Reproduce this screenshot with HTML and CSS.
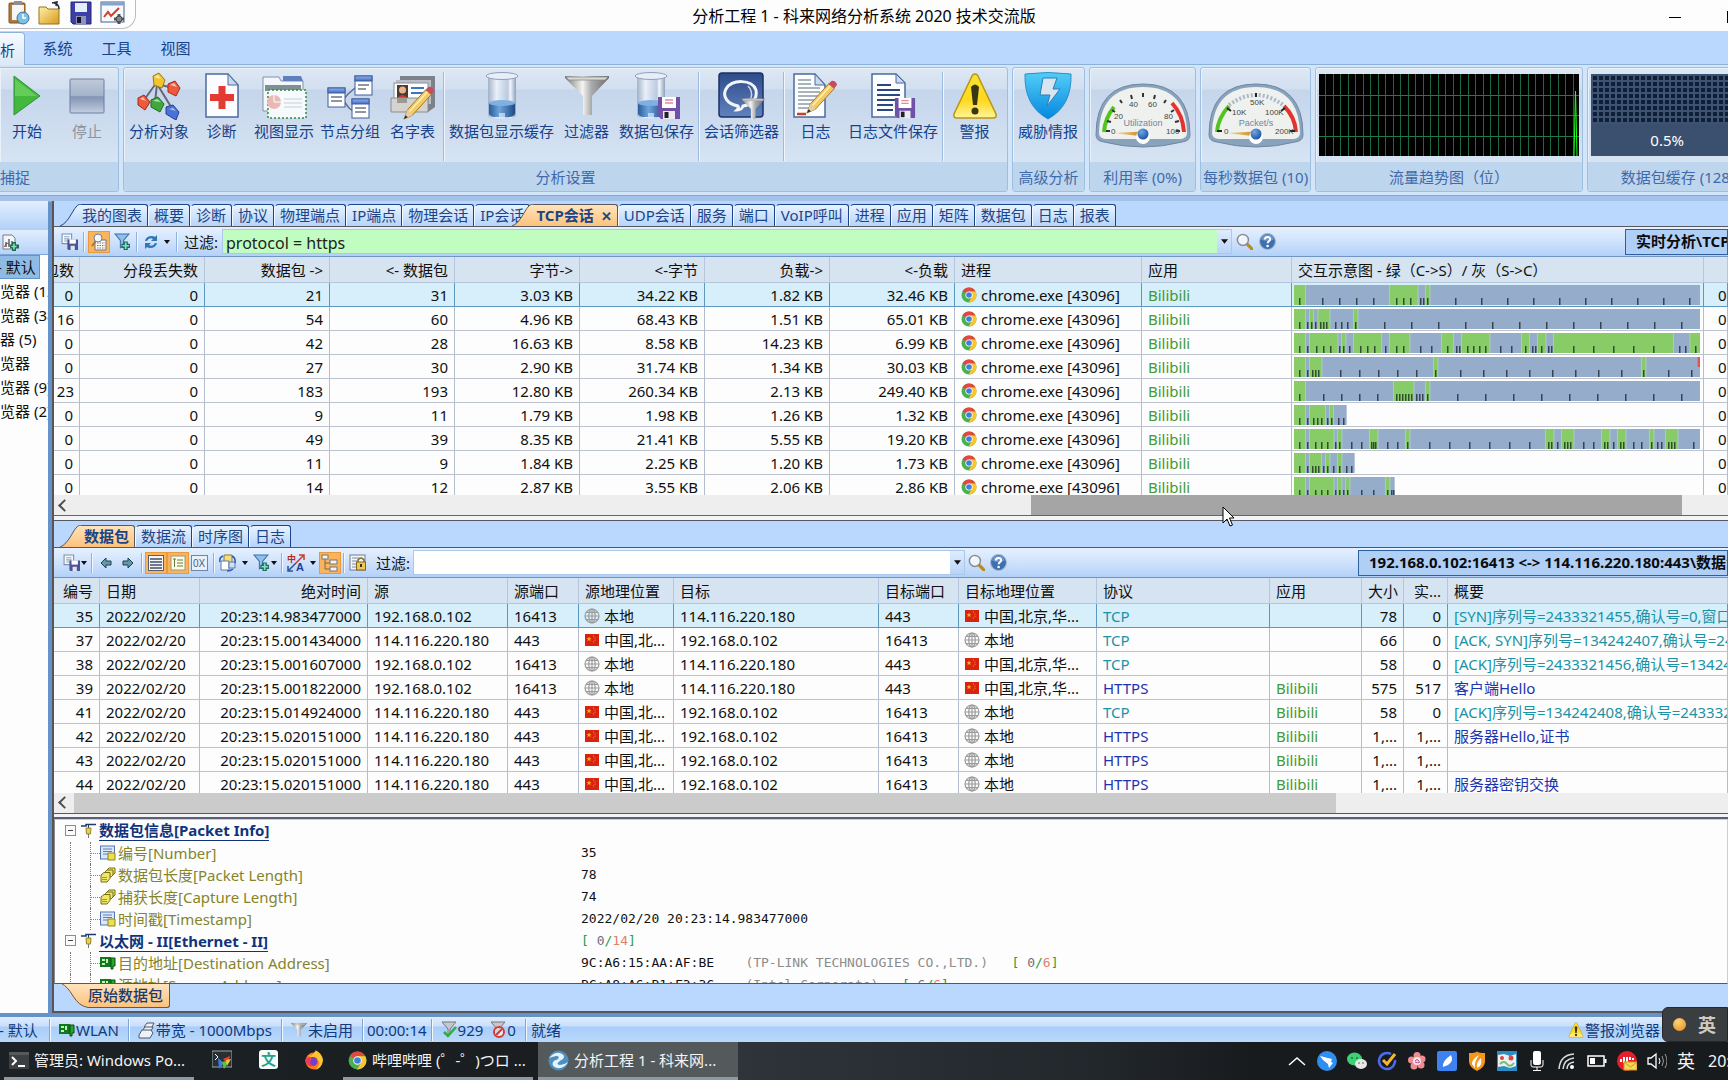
FILE: index.html
```html
<!DOCTYPE html>
<html lang="zh-CN">
<head>
    <meta charset="UTF-8">
    <meta name="viewport" content="width=device-width, initial-scale=1.0">
    <title>分析工程 1 - 科来网络分析系统 2020 技术交流版</title>
    <link rel="stylesheet" href="styles.css">
</head>
<body>
    <!-- shared icons -->
    <svg class="sprite" aria-hidden="true">
        <defs>
            <linearGradient id="gMetal" x1="0" x2="1"><stop offset="0" stop-color="#77797c"/><stop offset=".4" stop-color="#f4f4f2"/><stop offset=".6" stop-color="#a9aaab"/><stop offset="1" stop-color="#6d6e70"/></linearGradient>
            <linearGradient id="gGlass" x1="0" x2="1"><stop offset="0" stop-color="#9aabc2"/><stop offset=".3" stop-color="#eef4fb"/><stop offset=".7" stop-color="#b9c8dc"/><stop offset=".8" stop-color="#f5f9fd"/><stop offset="1" stop-color="#8496b2"/></linearGradient>
            <linearGradient id="gWater" x1="0" x2="1"><stop offset="0" stop-color="#2b5b99"/><stop offset=".4" stop-color="#6ea5dc"/><stop offset="1" stop-color="#1f4a86"/></linearGradient>
            <linearGradient id="gOrange" x1="0" y1="0" x2="0" y2="1"><stop offset="0" stop-color="#ffe3bd"/><stop offset="1" stop-color="#fdc27c"/></linearGradient>
            <linearGradient id="gTab" x1="0" y1="0" x2="0" y2="1"><stop offset="0" stop-color="#e9f3ff"/><stop offset="1" stop-color="#b6d4fb"/></linearGradient>
            <linearGradient id="gFolder" x1="0" y1="0" x2="1" y2="1"><stop offset="0" stop-color="#fff0a8"/><stop offset="1" stop-color="#d79a1c"/></linearGradient>
            <linearGradient id="gYellow" x1="0" y1="0" x2="0" y2="1"><stop offset="0" stop-color="#f7e232"/><stop offset=".6" stop-color="#ffd820"/><stop offset="1" stop-color="#fff59a"/></linearGradient>
            <linearGradient id="gShield" x1="0" y1="0" x2="0" y2="1"><stop offset="0" stop-color="#52cdf6"/><stop offset="1" stop-color="#0587e0"/></linearGradient>
            <linearGradient id="gStop" x1="0" y1="0" x2="0" y2="1"><stop offset="0" stop-color="#bfcadb"/><stop offset=".5" stop-color="#a3b2ca"/><stop offset=".52" stop-color="#8194b4"/><stop offset="1" stop-color="#c3cee0"/></linearGradient>
            <linearGradient id="gBlueCard" x1="0" y1="0" x2="0" y2="1"><stop offset="0" stop-color="#8fb4f4"/><stop offset="1" stop-color="#4468c4"/></linearGradient>
            <linearGradient id="gNavy" x1="0" y1="0" x2="0" y2="1"><stop offset="0" stop-color="#2f4c8a"/><stop offset="1" stop-color="#5f82bd"/></linearGradient>
            <linearGradient id="gNeedle" x1="0" x2="1"><stop offset="0" stop-color="#f5d48e"/><stop offset="1" stop-color="#c98a20"/></linearGradient>
            <radialGradient id="gBall" cx=".35" cy=".3" r=".8"><stop offset="0" stop-color="#6fa7e6"/><stop offset="1" stop-color="#174c9c"/></radialGradient>
            <pattern id="pGrid" width="15" height="21" patternUnits="userSpaceOnUse"><path d="M6.500 0v21M14.500 0v21" stroke="#1c6a40"/></pattern>
        </defs>
        <symbol id="i-chrome" viewBox="0 0 16 16">
            <circle cx="8" cy="8" r="7.5" fill="#4caf50"/>
            <path d="M8 8L1.5 4.2A7.5 7.5 0 0 1 14.6 4.5H8z" fill="#e04a3c"/>
            <path d="M8 4.5h6.6A7.5 7.5 0 0 1 7.6 15.5L11 9.8z" fill="#fbc530"/>
            <circle cx="8" cy="8" r="3.6" fill="#fff"/><circle cx="8" cy="8" r="2.8" fill="#3f7fe0"/>
        </symbol>
        <symbol id="i-globe" viewBox="0 0 16 16">
            <g fill="none" stroke="#9a9a9a" stroke-width="1.2"><circle cx="8" cy="8" r="7"/><ellipse cx="8" cy="8" rx="3.2" ry="7"/><path d="M1 8h14M8 1v14M2.2 4.4h11.6M2.2 11.6h11.6"/></g>
        </symbol>
        <symbol id="i-flag" viewBox="0 0 14 12">
            <rect width="14" height="12" fill="#d9230f"/><path d="M4 2.6l.7 1.7h1.8L5 5.4l.6 1.8L4 6.1 2.4 7.2 3 5.4 1.5 4.3h1.8z" fill="#ffb41e"/><path d="M8 1.5h1v1H8zM9.5 3.5h1v1h-1zM9.5 5.8h1v1h-1zM8 7.5h1v1H8z" fill="#f99a1c"/>
        </symbol>
        <symbol id="i-disk" viewBox="0 0 24 24">
            <path d="M1 1h22v22H4l-3-3z" fill="#6f52a8"/><rect x="5" y="1" width="14" height="11" fill="#fff"/><path d="M8 4h8M8 7h8" stroke="#e8899a" stroke-width="1.5"/><rect x="6" y="15" width="12" height="8" fill="#ece9f3"/><rect x="7.500" y="16" width="4" height="6" fill="#222"/>
        </symbol>
        <symbol id="i-find" viewBox="0 0 16 16">
            <path d="M10 10l5 5" stroke="#b58c22" stroke-width="3" stroke-linecap="round"/><circle cx="6.500" cy="6.500" r="5.200" fill="#eef5fc" stroke="#8c8c94" stroke-width="1.4"/><path d="M3.500 6a3.200 3.200 0 0 1 3-3" stroke="#fff" fill="none" stroke-width="1.5"/>
        </symbol>
        <symbol id="i-help" viewBox="0 0 16 16">
            <circle cx="8" cy="8" r="7.500" fill="#3e6fae" stroke="#a8b9cf"/><path d="M2 6a6.200 6.200 0 0 1 12 0q-6 3-12 0z" fill="#7fa8d8" opacity=".7"/><path d="M5.500 6.200C5.500 2.800 10.800 3 10.500 6c-.1 1.600-2.400 1.800-2.400 3.600" fill="none" stroke="#fff" stroke-width="1.800"/><circle cx="8.100" cy="12.200" r="1.200" fill="#fff"/>
        </symbol>
        <symbol id="i-caret" viewBox="0 0 6 4"><path d="M0 0h6L3 4z" fill="#111"/></symbol>
        <symbol id="i-savelist" viewBox="0 0 16 16">
            <path d="M1 1h9v9H1z" fill="#f6f9fd" stroke="#7f8ea6"/><path d="M3 3.500h5M3 5.500h5M3 7.500h3" stroke="#8fa6c6"/><path d="M6 6h10v10H7l-1-1z" fill="#4b5596"/><path d="M8 6h6v4H8z" fill="#fff"/><path d="M9 12h4v4H9z" fill="#dfe3ee"/>
        </symbol>
        <symbol id="i-funneladd" viewBox="0 0 16 16">
            <path d="M1 1h13L9 7v5l-3 2V7z" fill="#8fc0ea" stroke="#3d6fa8"/><path d="M11 8v8M7 12h8" stroke="#1f6a5a" stroke-width="4"/><path d="M11 9v6M8 12h6" stroke="#7fe0c8" stroke-width="1.600"/>
        </symbol>
        <symbol id="i-funnel" viewBox="0 0 46 42">
            <path d="M1 1h44v2L28 21v19h-9V21L1 3z" fill="url(#gMetal)"/><path d="M2 2h42l-3 3H5z" fill="#d9d9d6" stroke="#8a8b8c" stroke-width=".8"/>
        </symbol>
        <symbol id="i-beaker" viewBox="0 0 36 48">
            <path d="M4 4h28v38q0 4-5 4H9q-5 0-5-4z" fill="url(#gGlass)" opacity=".85"/>
            <path d="M5 31h26v10q0 3-5 4H10q-5-1-5-4z" fill="url(#gWater)"/><ellipse cx="18" cy="31" rx="13" ry="3" fill="#7fb0e2"/>
            <ellipse cx="18" cy="4" rx="16" ry="3.500" fill="#e6eef7" stroke="#8fa0b8"/><rect x="15" y="41" width="6" height="6" fill="#dbe9f6" opacity=".7"/>
        </symbol>
        <symbol id="i-pencil" viewBox="0 0 34 36">
            <path d="M1 35l4-10L24 4l6 5L10 31z" fill="#f4cb62" stroke="#9c7324"/><path d="M7 27L26 6" stroke="#fff0b4" stroke-width="1.500"/><path d="M24 4l3-3q4-1 6 4l-3 4z" fill="#c94a5e"/><path d="M1 35l4-10 5 6z" fill="#e7cda6"/><path d="M1 35l2-4 2 2z" fill="#222"/>
        </symbol>
        <symbol id="i-branch" viewBox="0 0 16 16">
            <path d="M0 3h5V1.500h10" fill="none" stroke="#1d3a70" stroke-width="1.500"/><path d="M7.500 2v3" stroke="#1d3a70"/><path d="M5 5h5l-.5 6h-4z" fill="#e9cf4a" stroke="#9a8420"/><path d="M7.500 11v4" stroke="#777"/>
        </symbol>
        <symbol id="i-sheet" viewBox="0 0 16 16">
            <rect x=".5" y="1" width="14" height="13" fill="#dbe8fa" stroke="#5577b0"/><path d="M3 4h9M3 6.500h9M3 9h5" stroke="#5b7fc0"/><path d="M8 8h7v7H8z" fill="#ece04c" stroke="#8d8424"/>
        </symbol>
        <symbol id="i-stack" viewBox="0 0 16 16">
            <g stroke="#776f12" fill="#f0e66a"><path d="M6 4l3-3h6v5l-2 2H6z"/><path d="M4 6l3-3h6v5l-2 2H4z"/><path d="M1 8l3-2.500h6v6L7 15H1z"/></g><path d="M2 10.500h5M2 12.500h5" stroke="#a39a30"/>
        </symbol>
        <symbol id="i-nic" viewBox="0 0 16 14">
            <path d="M0 1h11v10H0z" fill="#0d7a1c"/><path d="M2 3h3v2H2zM6 3h2v4H6zM2 7h3v2H2z" fill="#c7f0b8"/><path d="M11 2h4v8h-2v3h-2z" fill="#2ba52e" stroke="#0a4d10"/>
        </symbol>
        <symbol id="i-warn" viewBox="0 0 46 48">
            <path d="M23 2q2 0 3 2l18 38q1 4-3 4H5q-4 0-3-4L20 4q1-2 3-2z" fill="url(#gYellow)" stroke="#b8960f" stroke-width="1.500"/><path d="M19 15q4-5 8 0l-2 18h-4z" fill="#383614"/><circle cx="23" cy="39" r="3.500" fill="#383614"/>
        </symbol>
    </svg>

    <header class="titlebar">
        <div class="quick">
            <svg width="22" height="24" viewBox="0 0 22 24"><rect x="1" y="2" width="16" height="20" rx="1" fill="#b07a3a" stroke="#7c5220"/><rect x="4" y="4" width="12" height="15" fill="#f6f6f2"/><rect x="6" y="0" width="8" height="4" fill="#8d8f93"/><circle cx="15" cy="17" r="6" fill="#7cc0e4" stroke="#3f6f96"/><path d="M15 13v4h3" stroke="#fff" fill="none" stroke-width="1.500"/></svg>
            <svg width="24" height="24" viewBox="0 0 24 24"><path d="M1 6h7l2 2h11v15H1z" fill="url(#gFolder)" stroke="#9b7418"/><path d="M16 2q5 1 5 6M14 2l5-1-1 4" stroke="#29303c" fill="none" stroke-width="1.600"/></svg>
            <svg width="22" height="24" viewBox="0 0 22 24"><path d="M1 1h20v22H3l-2-2z" fill="#3c3fa6" stroke="#25277a"/><rect x="5" y="2" width="12" height="9" fill="#e7eefb"/><rect x="6" y="15" width="10" height="8" fill="#8f93b8"/><rect x="7" y="16" width="4" height="6" fill="#14152c"/></svg>
            <svg width="25" height="24" viewBox="0 0 25 24"><rect x="1" y="1" width="23" height="20" fill="#f7fafd" stroke="#44608f"/><path d="M1 3h23" stroke="#86a2cf" stroke-width="3"/><path d="M4 16l4-5 3 4 8-8" stroke="#d33c2b" fill="none" stroke-width="2"/><path d="M19 13v10M14 18h10" stroke="#555" stroke-width="3"/><circle cx="19" cy="18" r="3" fill="#888" stroke="#444"/></svg>
        </div>
        <h1>分析工程 1 - 科来网络分析系统 2020 技术交流版</h1>
        <div class="winbtns">
            <button type="button" aria-label="最小化"><svg width="12" height="12"><path d="M0 6.500h12" stroke="#000"/></svg></button>
            <button type="button" aria-label="最大化"><svg width="12" height="12"><rect x=".5" y=".5" width="11" height="11" fill="none" stroke="#000"/></svg></button>
        </div>
    </header>

    <nav class="menubar">
        <button type="button" class="on">析</button>
        <button type="button">系统</button>
        <button type="button">工具</button>
        <button type="button">视图</button>
    </nav>

    <section class="ribbon">
        <div class="group first">
            <div class="tools">
                <button type="button" class="tool"><svg width="30" height="48" viewBox="0 0 30 48"><path d="M2 4l26 20L2 43z" fill="#43b83c" stroke="#2f8f38"/><path d="M3 7l22 17H3z" fill="#7bdb6c" opacity=".6"/></svg><span>开始</span></button>
                <button type="button" class="tool" disabled><svg width="36" height="48" viewBox="0 0 36 48"><rect x="1" y="7" width="34" height="34" rx="1" fill="url(#gStop)" stroke="#6b7fa3"/></svg><span>停止</span></button>
            </div>
            <div class="caption">捕捉</div>
        </div>

        <div class="group">
            <div class="tools">
                <button type="button" class="tool"><svg width="46" height="48" viewBox="0 0 46 48">
                    <path d="M21 10L8 28M21 12l16 4M21 12l-2 18M21 12l16 26" stroke="#667" fill="none" stroke-width="2"/>
                    <path d="M17 4l6-3 6 7-3 8-8-3z" fill="#f2c52c" stroke="#a07a10"/><path d="M32 12l7-3 5 7-4 8-8-4z" fill="#ee5a3c" stroke="#a32a18"/><path d="M2 26l6-3 6 7-5 8-7-5z" fill="#ee5a3c" stroke="#a32a18"/><path d="M15 28l7-3 6 7-4 8-9-5z" fill="#3fa83c" stroke="#1d6a20"/><path d="M30 35l7-2 6 7-3 8-10-6z" fill="#4a72d8" stroke="#233f92"/>
                    <path d="M18 5l4-2 3 4zM34 13l4-2 3 4zM4 27l3-2 3 4zM17 29l4-2 4 3zM33 37l4-1 3 3z" fill="#fff" opacity=".6"/></svg><span>分析对象</span></button>
                <button type="button" class="tool"><svg width="34" height="48" viewBox="0 0 34 48"><path d="M1 2h22l10 11v32H1z" fill="#fafcff" stroke="#4d6a9c" stroke-width="1.500"/><path d="M23 2v11h10z" fill="#c7d8ef" stroke="#4d6a9c"/><path d="M17 14v23M5 25.500h24" stroke="#e23b34" stroke-width="7"/></svg><span>诊断</span></button>
                <button type="button" class="tool"><svg width="46" height="48" viewBox="0 0 46 48"><path d="M2 5h16l2 4h22v30H2z" fill="#f3f6fa" stroke="#8391a8"/><path d="M22 4h18l2 5H22z" fill="#5f80bf"/><path d="M4 13h36v6H4z" fill="#7f8f96"/><rect x="7" y="18" width="38" height="28" fill="#f7fafc" stroke="#2f8a3a" stroke-width="1.500" stroke-dasharray="2 2"/><circle cx="13" cy="30" r="7" fill="#e9b9b5"/><path d="M13 23v7h7" stroke="#fff" fill="none"/><path d="M23 27h18M23 31h18M23 35h18" stroke="#c3cedd"/></svg><span>视图显示</span></button>
                <button type="button" class="tool"><svg width="46" height="48" viewBox="0 0 46 48"><path d="M16 28l5-6 7-6M16 28l6 8 4 3" fill="none" stroke="#5c6e8c" stroke-width="1.500"/>
                    <g stroke="#3f5c9c"><rect x="28" y="4" width="17" height="19" fill="#fff"/><rect x="28" y="4" width="17" height="5" fill="url(#gBlueCard)"/><rect x="1" y="16" width="17" height="19" fill="#fff"/><rect x="1" y="16" width="17" height="5" fill="url(#gBlueCard)"/><rect x="25" y="27" width="17" height="19" fill="#fff"/><rect x="25" y="27" width="17" height="5" fill="url(#gBlueCard)"/></g>
                    <path d="M31 13h11M31 17h8M4 25h11M4 29h11M28 36h11M28 40h11" stroke="#6e7684" stroke-width="1.500"/></svg><span>节点分组</span></button>
                <button type="button" class="tool"><svg width="46" height="48" viewBox="0 0 46 48"><path d="M10 4h35v31l-7 5V12h-28z" fill="#7d828a"/><path d="M6 8h35v24H6z" fill="#b9bec6"/><rect x="4" y="11" width="34" height="20" fill="#fff" stroke="#8a8f96"/><rect x="7" y="13" width="11" height="14" fill="#4b3a34"/><circle cx="12.500" cy="18" r="3.500" fill="#e9b48c"/><path d="M7 27q5-8 11 0z" fill="#c93a34"/><path d="M21 16h13M21 21h13" stroke="#3a76c4" stroke-width="1.800"/><path d="M1 26h37v14H1z" fill="#d5d3cf" stroke="#8f8d88"/><path d="M7 26h10v5H7z" fill="#9b9994"/><svg x="12" y="14" width="34" height="34"><use href="#i-pencil"/></svg></svg><span>名字表</span></button>
                <i class="sep"></i>
                <button type="button" class="tool"><svg width="36" height="48"><use href="#i-beaker"/></svg><span>数据包显示缓存</span></button>
                <button type="button" class="tool"><svg width="46" height="48"><use href="#i-funnel" y="3" height="42"/></svg><span>过滤器</span></button>
                <button type="button" class="tool"><svg width="48" height="48"><use href="#i-beaker" width="36" height="48"/><use href="#i-disk" x="24" y="24" width="24" height="24"/></svg><span>数据包保存</span></button>
                <i class="sep"></i>
                <button type="button" class="tool"><svg width="48" height="48" viewBox="0 0 48 48"><rect x="1" y="1" width="44" height="44" rx="3" fill="url(#gNavy)" stroke="#1d3264" stroke-width="1.500"/><path d="M20 34C9 32 4 24 8 17 14 7 34 7 38 18 40 28 32 33 25 34q-1 4-6 4 2-2 1-4z" fill="none" stroke="#f2f6fb" stroke-width="3"/><path d="M30 14q5 5 3 12" fill="none" stroke="#cdd8ea" stroke-width="1.500"/><svg x="23" y="26" width="24" height="22" viewBox="0 0 46 42"><use href="#i-funnel"/></svg></svg><span>会话筛选器</span></button>
                <i class="sep"></i>
                <button type="button" class="tool"><svg width="46" height="48" viewBox="0 0 46 48"><path d="M1 2h21l10 11v32H1z" fill="#fcfdff" stroke="#4d6a9c" stroke-width="1.500"/><path d="M22 2v11h10z" fill="#c7d8ef" stroke="#4d6a9c"/><path d="M5 8h13M5 12h13M5 16h22M5 20h22M5 24h22M5 28h20M5 32h16M5 36h12" stroke="#8f99a6" stroke-width="1.300"/><path d="M4 42h9" stroke="#c8402a" stroke-width="2.500"/><svg x="12" y="8" width="34" height="34"><use href="#i-pencil"/></svg></svg><span>日志</span></button>
                <button type="button" class="tool"><svg width="46" height="48" viewBox="0 0 46 48"><path d="M2 2h24l9 9v34H2z" fill="#fcfdff" stroke="#4d6a9c" stroke-width="1.500"/><path d="M26 2v9h9z" fill="#c7d8ef" stroke="#4d6a9c"/><path d="M7 13h14M7 18h23M7 23h23M7 28h20M7 33h16M7 38h16" stroke="#2b477f" stroke-width="1.800"/><use href="#i-disk" x="24" y="24" width="22" height="24"/></svg><span>日志文件保存</span></button>
                <i class="sep"></i>
                <button type="button" class="tool"><svg width="46" height="48"><use href="#i-warn"/></svg><span>警报</span></button>
            </div>
            <div class="caption">分析设置</div>
        </div>

        <div class="group">
            <div class="tools">
                <button type="button" class="tool"><svg width="48" height="48" viewBox="0 0 48 48"><path d="M1 2q23-3 46 0 1 32-23 45Q0 34 1 2z" fill="url(#gShield)" stroke="#2b8fca"/><path d="M19 6h14l-4 11h7L23 34l3-11h-10z" fill="#d8e4f0" stroke="#2a7fb8"/></svg><span>威胁情报</span></button>
            </div>
            <div class="caption">高级分析</div>
        </div>

        <div class="group gauge">
            <div class="tools">
                <svg width="98" height="66" viewBox="0 0 98 66">
                    <path d="M2 52Q2 1 49 1t47 51q0 6-8 7-39 10-78 0-8-1-8-7z" fill="#8aa3bd" stroke="#6f88a4"/>
                    <path d="M5 50Q6 4 49 4t44 46q0 5-6 6H11q-6-1-6-6z" fill="#eef1ee"/>
                    <path d="M10 49q1-14 10-25" stroke="#52c41f" stroke-width="4" fill="none"/><path d="M78 20q11 12 12 29" stroke="#e2332f" stroke-width="4" fill="none"/>
                    <path d="M12 48h4M13 38l4 1M18 27l3 2M26 17l2 3M37 12l1 4M49 10v4M61 12l-1 4M72 17l-2 3M80 27l-3 2M85 38l-4 1M86 48h-4" stroke="#333" stroke-width="2"/>
                    <g class="dial"><text x="17" y="51">0</text><text x="20" y="36">20</text><text x="35" y="24">40</text><text x="54" y="24">60</text><text x="70" y="36">80</text><text x="72" y="51">100</text></g>
                    <text x="49" y="43" class="unit">Utilization</text>
                    <path d="M20 50l29-1.500v5z" fill="url(#gNeedle)"/><circle cx="49" cy="54" r="7" fill="#fff"/><circle cx="49" cy="51" r="5.500" fill="url(#gBall)"/>
                </svg>
            </div>
            <div class="caption">利用率 (0%)</div>
        </div>

        <div class="group gauge">
            <div class="tools">
                <svg width="98" height="66" viewBox="0 0 98 66">
                    <path d="M2 52Q2 1 49 1t47 51q0 6-8 7-39 10-78 0-8-1-8-7z" fill="#8aa3bd" stroke="#6f88a4"/>
                    <path d="M5 50Q6 4 49 4t44 46q0 5-6 6H11q-6-1-6-6z" fill="#eef1ee"/>
                    <path d="M22 22q27-20 54 0" stroke="#a9b8ca" stroke-width="4" stroke-dasharray="2 2" fill="none"/>
                    <path d="M10 49q1-14 12-26" stroke="#52c41f" stroke-width="4" fill="none"/><path d="M77 23q11 11 12 26" stroke="#e2332f" stroke-width="4" fill="none"/>
                    <path d="M10 48h5M20 25l4 3M49 10v4M78 25l-4 3M88 48h-5" stroke="#222" stroke-width="2"/>
                    <g class="dial"><text x="17" y="51">0</text><text x="25" y="32">10K</text><text x="43" y="22">50K</text><text x="58" y="32">100K</text><text x="68" y="51">200K</text></g>
                    <text x="49" y="43" class="unit">Packet/s</text>
                    <path d="M20 50l29-1.500v5z" fill="url(#gNeedle)"/><circle cx="49" cy="54" r="7" fill="#fff"/><circle cx="49" cy="51" r="5.500" fill="url(#gBall)"/>
                </svg>
            </div>
            <div class="caption">每秒数据包 (10)</div>
        </div>

        <div class="group trend">
            <div class="tools">
                <svg width="260" height="82" viewBox="0 0 260 82"><rect width="260" height="82" fill="#000"/><rect width="260" height="82" fill="url(#pGrid)"/><path d="M0 21.500h260M0 41.500h260M0 62.500h260" stroke="#1f7a4a"/><path d="M255 82l1.500-65 1.500 65" stroke="#1dff1d" fill="none"/></svg>
            </div>
            <div class="caption">流量趋势图（位）</div>
        </div>

        <div class="group buffer">
            <div class="tools"><div class="meter"><span>0.5%</span></div></div>
            <div class="caption">数据包缓存 (128.0MB)</div>
        </div>
    </section>

    <main class="workspace">
        <aside class="explorer">
            <div class="explorer-head"></div>
            <div class="explorer-bar">
                <button type="button" aria-label="添加图表"><svg width="17" height="18" viewBox="0 0 17 18"><path d="M1 1h9l3 3v11H1z" fill="#f4f7fa" stroke="#6f7f8c"/><path d="M4 13V8M7 13V5M10 13V7" stroke="#6f7f8c" stroke-width="1.800"/><path d="M2 13l3-4 3 2" stroke="#c0392b" fill="none"/><path d="M12 8v9M8 12.500h9" stroke="#1e6a4d" stroke-width="4"/><path d="M12 9.500v6M9.500 12.500h5" stroke="#8be0c0" stroke-width="1.500"/></svg></button>
            </div>
            <ul>
                <li class="on">- 默认</li>
                <li>览器 (12)</li>
                <li>览器 (38)</li>
                <li>器 (5)</li>
                <li>览器</li>
                <li>览器 (9)</li>
                <li>览器 (2)</li>
            </ul>
        </aside>

        <div class="panel">
            <nav class="tabs">
                <svg class="slant" width="22" height="22"><path d="M0 22Q6 20 12 9T22 1V22z" fill="url(#gTab)"/><path d="M0 22Q6 20 12 9T22 .5" fill="none" stroke="#1c4587"/></svg>
                <button type="button" class="lead">我的图表</button>
                <button type="button">概要</button>
                <button type="button">诊断</button>
                <button type="button">协议</button>
                <button type="button">物理端点</button>
                <button type="button">IP端点</button>
                <button type="button">物理会话</button>
                <button type="button">IP会话</button>
                <svg class="slant over" width="22" height="22"><path d="M0 22Q6 20 12 9T22 1V22z" fill="url(#gOrange)"/><path d="M0 22Q6 20 12 9T22 .5" fill="none" stroke="#5a5a5a"/></svg>
                <button type="button" class="active">TCP会话<span class="x">✕</span></button>
                <button type="button">UDP会话</button>
                <button type="button">服务</button>
                <button type="button">端口</button>
                <button type="button">VoIP呼叫</button>
                <button type="button">进程</button>
                <button type="button">应用</button>
                <button type="button">矩阵</button>
                <button type="button">数据包</button>
                <button type="button">日志</button>
                <button type="button">报表</button>
            </nav>

            <div class="toolbar main">
                <button type="button" class="tb" aria-label="保存"><svg width="17" height="17"><use href="#i-savelist"/></svg></button>
                <i class="div"></i>
                <button type="button" class="tb hot" aria-label="显示细节"><svg width="18" height="18" viewBox="0 0 18 18"><path d="M5 7h11v10H5z" fill="#fdfbf4" stroke="#6d7486"/><path d="M7 10h8M7 12.500h8M7 15h8" stroke="#6d7486" stroke-dasharray="1.500 1"/><path d="M6 8L2 13" stroke="#9c7a38" stroke-width="2"/><circle cx="8" cy="5" r="4" fill="#f5f8fb" stroke="#77808e"/></svg></button>
                <button type="button" class="tb" aria-label="添加过滤器"><svg width="17" height="17"><use href="#i-funneladd"/></svg></button>
                <i class="div"></i>
                <button type="button" class="tb" aria-label="刷新"><svg width="16" height="16" viewBox="0 0 16 16"><path d="M2 7q1-5 7-5 2 0 3 1l2-2v6H8l2-2q-4-2-6 2zM14 9q-1 5-7 5-2 0-3-1l-2 2V9h6l-2 2q4 2 6-2z" fill="#2f78b8"/></svg><svg class="caret" width="6" height="4"><use href="#i-caret"/></svg></button>
                <i class="div"></i>
                <label for="filterTop">过滤:</label>
                <div class="combo green"><input type="text" id="filterTop" value="protocol = https"><button type="button" aria-label="展开"><svg width="7" height="5"><use href="#i-caret"/></svg></button></div>
                <button type="button" class="tb" aria-label="查找"><svg width="17" height="17"><use href="#i-find"/></svg></button>
                <button type="button" class="tb" aria-label="帮助"><svg width="17" height="17"><use href="#i-help"/></svg></button>
                <div class="crumb top">实时分析\TCP会话: 128</div>
            </div>

            <div class="grid-wrap upper">
                <table class="grid">
                    <colgroup><col class="w26"><col class="w125"><col class="w125"><col class="w125"><col class="w125"><col class="w125"><col class="w125"><col class="w125"><col class="w187"><col class="w150"><col class="w412"><col></colgroup>
                    <thead>
                        <tr><th class="r cut">包数</th><th class="r">分段丢失数</th><th class="r">数据包 -&gt;</th><th class="r">&lt;- 数据包</th><th class="r">字节-&gt;</th><th class="r">&lt;-字节</th><th class="r">负载-&gt;</th><th class="r">&lt;-负载</th><th>进程</th><th>应用</th><th>交互示意图 - 绿（C-&gt;S）/ 灰（S-&gt;C）</th><th></th></tr>
                    </thead>
                    <tbody id="sessions"></tbody>
                </table>
            </div>
            <div class="scroll drag"><span class="arrow"></span><span class="gap"></span><span class="thumb"></span><span class="tail"></span></div>
            <div class="splitter"></div>

            <nav class="tabs low">
                <svg class="slant" width="22" height="22"><path d="M0 22Q6 20 12 9T22 1V22z" fill="url(#gOrange)"/><path d="M0 22Q6 20 12 9T22 .5" fill="none" stroke="#5a5a5a"/></svg>
                <button type="button" class="active">数据包</button>
                <button type="button">数据流</button>
                <button type="button">时序图</button>
                <button type="button">日志</button>
            </nav>

            <div class="toolbar">
                <button type="button" class="tb" aria-label="导出"><svg width="17" height="17"><use href="#i-savelist"/></svg><svg class="near" width="6" height="4"><use href="#i-caret"/></svg></button>
                <i class="div"></i>
                <button type="button" class="tb" aria-label="上一个"><svg width="12" height="12" viewBox="0 0 12 12"><path d="M1 6l5-5v3h5v4H6v3z" fill="#5f9ca8" stroke="#243b57"/></svg></button>
                <button type="button" class="tb" aria-label="下一个"><svg width="12" height="12" viewBox="0 0 12 12"><path d="M11 6L6 1v3H1v4h5v3z" fill="#5f9ca8" stroke="#243b57"/></svg></button>
                <i class="div"></i>
                <button type="button" class="tb hot" aria-label="列表"><svg width="16" height="16" viewBox="0 0 16 16"><rect x=".5" y=".5" width="15" height="15" fill="#f3f6fa" stroke="#555f6e"/><path d="M2 4h12M2 7h12M2 10h12M2 13h12" stroke="#445067" stroke-width="1.300"/></svg></button>
                <button type="button" class="tb hot" aria-label="解码"><svg width="16" height="16" viewBox="0 0 16 16"><rect x="1" y="1" width="14" height="14" fill="#fcfbe8" stroke="#9b9a80"/><path d="M3 4h3M4.500 4v8M7 5h6M7 8h6M7 11h6" stroke="#6d7a3a"/></svg></button>
                <button type="button" class="tb" aria-label="十六进制"><svg width="18" height="16" viewBox="0 0 18 16"><rect x=".5" y=".5" width="16" height="15" fill="#eaf0f8" stroke="#6f86a8"/><text x="2" y="12" class="hex">0X</text></svg></button>
                <i class="div"></i>
                <button type="button" class="tb" aria-label="定位"><svg width="18" height="18" viewBox="0 0 18 18"><path d="M5 1h8v8H5z" fill="#f4df7c" stroke="#8b7b30"/><path d="M2 7h8v9H2z" fill="#fff" stroke="#5f79a8"/><path d="M10 8h6v6h-6z" fill="#cfdff6" stroke="#5f79a8"/><path d="M1 8q-1-5 3-6M16 9q1-5-3-7M14 15q-2 2-6 2" stroke="#2c5fb4" stroke-width="1.500" fill="none"/></svg><svg class="caret" width="6" height="4"><use href="#i-caret"/></svg></button>
                <button type="button" class="tb" aria-label="添加过滤器"><svg width="17" height="17"><use href="#i-funneladd"/></svg><svg class="near" width="6" height="4"><use href="#i-caret"/></svg></button>
                <i class="div"></i>
                <button type="button" class="tb" aria-label="编码"><svg width="18" height="18" viewBox="0 0 18 18"><path d="M2 16L9 9M1 12v5h5" stroke="#28539a" stroke-width="1.500" fill="none"/><path d="M9 9l7-7M12 1h5v5" stroke="#c43c2b" stroke-width="1.500" fill="none"/><text x="0" y="8" class="zh">中</text><text x="9" y="17" class="az">A</text></svg><svg class="caret" width="6" height="4"><use href="#i-caret"/></svg></button>
                <button type="button" class="tb hot" aria-label="树形"><svg width="18" height="18" viewBox="0 0 18 18"><path d="M4 5v10h6M4 9h6" fill="none" stroke="#6f6a5c"/><g fill="#f5f3ec" stroke="#777"><rect x="1" y="1" width="6" height="4"/><rect x="9" y="6" width="7" height="4"/><rect x="9" y="13" width="7" height="4"/></g></svg></button>
                <i class="div"></i>
                <button type="button" class="tb" aria-label="锁定"><svg width="18" height="18" viewBox="0 0 18 18"><rect x="1" y="1" width="15" height="15" fill="#f2f5fa" stroke="#6f7c92"/><path d="M3 4h7M3 7h5M3 10h4M3 13h4" stroke="#7c8aa3"/><path d="M9 8V6q3-4 6 0v2" stroke="#7d6b2c" stroke-width="1.500" fill="none"/><rect x="7.500" y="8" width="9" height="8" fill="#f2c84b" stroke="#80662a"/><path d="M12 10v3" stroke="#222" stroke-width="1.800"/></svg></button>
                <label for="filterLow">过滤:</label>
                <div class="combo"><input type="text" id="filterLow" value=""><button type="button" aria-label="展开"><svg width="7" height="5"><use href="#i-caret"/></svg></button></div>
                <button type="button" class="tb" aria-label="查找"><svg width="17" height="17"><use href="#i-find"/></svg></button>
                <button type="button" class="tb" aria-label="帮助"><svg width="17" height="17"><use href="#i-help"/></svg></button>
                <div class="crumb bottom">192.168.0.102:16413 &lt;-&gt; 114.116.220.180:443\数据包: 52</div>
            </div>

            <div class="grid-wrap lower">
                <table class="grid">
                    <colgroup><col class="w46"><col class="w100"><col class="w168"><col class="w140"><col class="w71"><col class="w95"><col class="w205"><col class="w80"><col class="w138"><col class="w173"><col class="w92"><col class="w42"><col class="w44"><col></colgroup>
                    <thead>
                        <tr><th class="r">编号</th><th>日期</th><th class="r">绝对时间</th><th>源</th><th>源端口</th><th>源地理位置</th><th>目标</th><th>目标端口</th><th>目标地理位置</th><th>协议</th><th>应用</th><th class="r">大小</th><th class="r">实...</th><th>概要</th></tr>
                    </thead>
                    <tbody id="packets"></tbody>
                </table>
            </div>
            <div class="scroll rest"><span class="arrow"></span><span class="thumb"></span><span class="tail"></span></div>
            <div class="splitter thick"></div>

            <div class="decode">
                <ul>
                    <li class="node"><i class="box"></i><svg width="16" height="16"><use href="#i-branch"/></svg><a href="#">数据包信息[Packet Info]</a></li>
                    <li class="leaf"><span class="name"><svg width="16" height="16"><use href="#i-sheet"/></svg>编号[Number]</span><code>35</code></li>
                    <li class="leaf"><span class="name"><svg width="16" height="16"><use href="#i-stack"/></svg>数据包长度[Packet Length]</span><code>78</code></li>
                    <li class="leaf"><span class="name"><svg width="16" height="16"><use href="#i-stack"/></svg>捕获长度[Capture Length]</span><code>74</code></li>
                    <li class="leaf"><span class="name"><svg width="16" height="16"><use href="#i-sheet"/></svg>时间戳[Timestamp]</span><code>2022/02/20 20:23:14.983477000</code></li>
                    <li class="node"><i class="box"></i><svg width="16" height="16"><use href="#i-branch"/></svg><span class="name"><a href="#">以太网 - II[Ethernet - II]</a></span><code><b>[</b> <u>0</u><b>/</b><s>14</s><b>]</b></code></li>
                    <li class="leaf"><span class="name"><svg width="16" height="14"><use href="#i-nic"/></svg>目的地址[Destination Address]</span><code>9C:A6:15:AA:AF:BE    <em>(TP-LINK TECHNOLOGIES CO.,LTD.)</em>   <b>[</b> <u>0</u><b>/</b><s>6</s><b>]</b></code></li>
                    <li class="leaf"><span class="name"><svg width="16" height="14"><use href="#i-nic"/></svg>源地址[Source Address]</span><code>BC:A8:A6:B1:F3:3C    <em>(Intel Corporate)</em>   <b>[</b> <u>6</u><b>/</b><s>6</s><b>]</b></code></li>
                </ul>
            </div>
            <div class="foot-tabs">
                <svg width="28" height="24"><path d="M0 0H28V23H26Q18 23 12 12T0 0z" fill="url(#gOrange)"/><path d="M2 0Q7 2 13 12T28 23.500" fill="none" stroke="#5a5a5a"/></svg>
                <button type="button">原始数据包</button>
            </div>
        </div>
    </main>

    <footer class="status">
        <span class="cell profile">- 默认</span>
        <span class="cell"><svg width="16" height="14"><use href="#i-nic"/></svg>WLAN</span>
        <span class="cell"><svg width="17" height="18" viewBox="0 0 17 18"><g fill="#eef2f8" stroke="#4b566b"><path d="M6 6l3-4h7l-3 6z"/><path d="M4 10l3-4h8l-3 6z"/><path d="M1 14l3-5h9l2 3-3 5H1z"/></g></svg>带宽 - 1000Mbps</span>
        <span class="cell"><svg width="16" height="16"><use href="#i-funnel"/></svg>未启用</span>
        <span class="cell clock">00:00:14</span>
        <span class="cell"><svg width="16" height="17" viewBox="0 0 16 17"><path d="M1 1h14L9 8v5H7V8z" fill="#c4c8ce" stroke="#777"/><path d="M3 11l4 4 8-9" stroke="#2fae3a" stroke-width="2.500" fill="none"/></svg>929<svg class="second" width="16" height="17" viewBox="0 0 16 17"><path d="M1 1h14L9 8v5H7V8z" fill="#c4c8ce" stroke="#777"/><circle cx="9" cy="11" r="5" fill="#fff" fill-opacity=".6" stroke="#d83a2e" stroke-width="2"/><path d="M6 14l6-6" stroke="#d83a2e" stroke-width="2"/></svg>0</span>
        <span class="cell ready">就绪</span>
        <span class="alarm"><svg width="16" height="16"><use href="#i-warn"/></svg>警报浏览器</span>
    </footer>

    <div class="taskbar">
        <button type="button" class="task"><svg width="20" height="17" viewBox="0 0 20 17"><rect width="20" height="17" fill="#3c4043"/><path d="M0 0h20v3H0z" fill="#55595d"/><path d="M3 5l4 4-4 4M9 14h7" stroke="#fff" stroke-width="2" fill="none"/></svg>管理员: Windows Po...</button>
        <button type="button" class="pin" aria-label="终端"><svg width="20" height="20" viewBox="0 0 20 20"><rect y="1" width="20" height="16" fill="#2a2f33" stroke="#9aa"/><path d="M3 4l3 3-3 3" stroke="#fff" fill="none"/><path d="M6 8l6 5-5 6z" fill="#3a7ee0"/><path d="M11 9l7-3-2 8z" fill="#e8402c"/><path d="M10 12l8-2-6 9z" fill="#58c04a"/><path d="M14 10l5-1-4 7z" fill="#f7c52d"/></svg></button>
        <button type="button" class="pin" aria-label="翻译"><svg width="19" height="19" viewBox="0 0 19 19"><rect width="19" height="19" rx="3" fill="#f7fbfa"/><text x="2" y="15" class="wen">文</text></svg></button>
        <button type="button" class="pin" aria-label="Firefox"><svg width="20" height="20" viewBox="0 0 20 20"><circle cx="10" cy="11" r="8.500" fill="#ff7a1a"/><path d="M3 5q3 1 5 0 5-5 3-5 7 3 8 10-1 8-8 10 6-5 3-10-3-4-7-3z" fill="#ffc62e"/><circle cx="9" cy="11.500" r="4.500" fill="#7a3fc0"/><path d="M1 10q2-4 7-2l-1 2q-3 4 3 6-7 2-9-6z" fill="#ee3b5b"/></svg></button>
        <button type="button" class="task chrome"><svg width="19" height="19"><use href="#i-chrome"/></svg>哔哩哔哩 (゜-゜)つロ ...</button>
        <button type="button" class="task current"><svg width="21" height="21" viewBox="0 0 21 21"><circle cx="10.500" cy="10.500" r="10" fill="#4d8fc0"/><path d="M1 8q5-6 11-5 6 2 3 6-3 3-6 1 4-4-1-4-4 1-7 2zM20 12q-4 7-11 6-6-2-4-6 3-4 7-1-5 3 0 4 4 0 8-3z" fill="#e6f2fa"/></svg>分析工程 1 - 科来网...</button>
        <div class="tray">
            <svg viewBox="0 0 20 20"><path d="M2 14l8-7 8 7" stroke="#fff" stroke-width="1.500" fill="none"/></svg>
            <svg viewBox="0 0 20 20"><circle cx="10" cy="10" r="10" fill="#2f8ef0"/><path d="M3 5l12 3-1 3 2 1-4 5-1-4-5-4z" fill="#fff"/></svg>
            <svg viewBox="0 0 20 20"><ellipse cx="7.500" cy="8" rx="7.500" ry="6.500" fill="#3ed073"/><circle cx="5" cy="7" r="1" fill="#174"/><circle cx="10" cy="7" r="1" fill="#174"/><ellipse cx="14" cy="13" rx="6" ry="5" fill="#e6e8e8"/><circle cx="12" cy="12" r=".8" fill="#555"/><circle cx="16" cy="12" r=".8" fill="#555"/></svg>
            <svg viewBox="0 0 20 20"><path d="M14 3A8 8 0 1 0 18 9" stroke="#4a6bf0" stroke-width="2.500" fill="none"/><path d="M6 9l4 4 8-10" stroke="#f5b62a" stroke-width="3" fill="none"/></svg>
            <svg viewBox="0 0 20 20"><g fill="#f08d92"><circle cx="10" cy="4.500" r="3.500"/><circle cx="15" cy="8" r="3.500"/><circle cx="14" cy="14" r="3.500"/><circle cx="7" cy="15" r="3.500"/><circle cx="4.500" cy="9" r="3.500"/></g><circle cx="10" cy="10" r="4" fill="#fbe3e3"/><path d="M8 10q2-3 4 0t-4 1" stroke="#b04a9a" fill="none"/></svg>
            <svg viewBox="0 0 20 20"><rect width="20" height="20" rx="2" fill="#3d82ee"/><path d="M14 4q3 6-3 10l-5 2q-1-6 8-12z" fill="#fff"/></svg>
            <svg viewBox="0 0 20 20"><path d="M2 2q8 0 8-2 0 2 8 2v9q-1 6-8 9-7-3-8-9z" fill="#f5971d"/><path d="M12 4q-7 4-7 9l3 4q-1-6 4-13zM14 7q-5 4-4 10l3-2q2-3 1-8z" fill="#fff"/></svg>
            <svg viewBox="0 0 20 20"><rect width="20" height="20" fill="#2a8ec4"/><path d="M1 4l6-1 6 2 6-2v12l-6 2-6-2-6 1z" fill="#e9f1f4"/><path d="M3 13q4-4 7 0t7-1" stroke="#7fb96c" stroke-width="2" fill="none"/><circle cx="5" cy="7" r="2" fill="#d8483c"/><circle cx="14" cy="7" r="2.500" fill="#d8483c"/></svg>
            <svg viewBox="0 0 20 20"><rect x="6" y="0" width="8" height="14" rx="2" fill="#fff"/><path d="M4 9v5q0 2 2 2h8q2 0 2-2V9M10 16v4M6 19.500h8" stroke="#fff" fill="none"/></svg>
            <svg viewBox="0 0 20 20"><g stroke="#ddd" fill="none" stroke-width="1.500"><path d="M2 18Q3 4 17 3"/><path d="M6 18Q7 8 17 7"/><path d="M10 18q0-6 7-7"/></g><circle cx="15" cy="16" r="2" fill="#fff"/></svg>
            <svg viewBox="0 0 20 20"><rect x="1" y="5" width="16" height="10" fill="none" stroke="#fff" stroke-width="1.500"/><rect x="3" y="7" width="5" height="6" fill="#fff"/><path d="M18.500 8v4" stroke="#fff" stroke-width="2"/></svg>
            <svg viewBox="0 0 20 20"><circle cx="10" cy="10" r="10" fill="#e3202b"/><path d="M4 11V8M7 12V6M10 11V6M13 9V6M16 9V7" stroke="#fff" stroke-width="2"/><rect x="7" y="11" width="13" height="8" fill="#f8d65a" stroke="#c79a20"/><path d="M7 11l6.500 5L20 11" stroke="#c79a20" fill="none"/></svg>
            <svg viewBox="0 0 20 20"><path d="M1 7h3l5-4v14l-5-4H1z" fill="none" stroke="#fff" stroke-width="1.300"/><path d="M12 7q2 3 0 6" stroke="#fff" fill="none"/><path d="M15 5q3 5 0 10M18 3q4 7 0 14" stroke="#999" fill="none"/></svg>
            <span class="lang">英</span>
        </div>
        <time>20:24</time>
    </div>

    <div class="ime"><i></i><b>英</b><span>,</span></div>
    <svg class="cursor" width="13" height="21" viewBox="0 0 13 21"><path d="M1 1v16l4-4 3 7 2.500-1-3-7H12z" fill="#fff" stroke="#000"/></svg>

    <script>
        // lost, segments lost, packets out/in, bytes out/in, payload out/in
        const sessions = [
            [0, 0, 21, 31, '3.03 KB', '34.22 KB', '1.82 KB', '32.46 KB'],
            [16, 0, 54, 60, '4.96 KB', '68.43 KB', '1.51 KB', '65.01 KB'],
            [0, 0, 42, 28, '16.63 KB', '8.58 KB', '14.23 KB', '6.99 KB'],
            [0, 0, 27, 30, '2.90 KB', '31.74 KB', '1.34 KB', '30.03 KB'],
            [23, 0, 183, 193, '12.80 KB', '260.34 KB', '2.13 KB', '249.40 KB'],
            [0, 0, 9, 11, '1.79 KB', '1.98 KB', '1.26 KB', '1.32 KB'],
            [0, 0, 49, 39, '8.35 KB', '21.41 KB', '5.55 KB', '19.20 KB'],
            [0, 0, 11, 9, '1.84 KB', '2.25 KB', '1.20 KB', '1.73 KB'],
            [0, 0, 14, 12, '2.87 KB', '3.55 KB', '2.06 KB', '2.86 KB']
        ];

        // end of the bar, client segments, packet ticks
        const flows = [
            { end: 1292, c: [[74,108],[362,445],[470,481]], t: [91,160,211,262,313,382,403,424,454,463,475,559,637,715,793,871,949,1027,1105,1183,1261] },
            { end: 1292, c: [[74,108],[122,132],[147,181],[254,265]], t: [91,115,127,139,154,163,172,199,217,235,259,346,427,508,589,670,751,832,913,994,1075,1156,1237] },
            { end: 1292, c: [[74,108],[122,205],[218,229],[254,336],[362,421],[517,552],[578,661],[758,780],[805,829],[853,1212],[1263,1292]], t: [91,115,142,163,184,211,223,241,274,295,316,349,382,403,454,487,535,562,571,595,613,631,649,694,727,769,790,799,817,838,847,913,973,1033,1093,1153,1231,1249,1279] },
            { end: 1292, c: [[74,108],[122,157],[494,505],[1117,1129]], t: [91,115,130,139,148,214,271,328,385,442,499,574,643,712,781,850,919,988,1057,1123,1198,1267], reset: true },
            { end: 1292, c: [[74,108],[373,433],[470,481]], t: [91,163,217,271,325,382,391,400,409,418,427,442,451,460,475,565,649,733,817,901,985,1069,1153,1237] },
            { end: 232, c: [[74,108],[122,168],[182,192]], t: [91,115,133,145,157,175,187,208,223] },
            { end: 1292, c: [[74,108],[122,193],[206,217],[301,325],[410,421],[829,853],[878,913],[998,1021],[1045,1069],[1141,1153],[1190,1225]], t: [91,115,139,157,175,199,211,247,277,307,313,319,355,385,415,481,541,601,661,721,781,838,847,865,886,895,904,943,973,1006,1015,1033,1054,1063,1093,1117,1147,1165,1177,1198,1207,1216,1273] },
            { end: 256, c: [[74,108],[122,156],[170,181],[206,217]], t: [91,115,130,139,148,163,175,193,211,232,247] },
            { end: 376, c: [[74,108],[122,193],[206,217],[230,241],[350,361]], t: [91,115,139,157,175,199,211,223,235,277,313,355,367,373] }
        ];

        function flowBar(f) {
            let svg = `<svg class="flow" width="406" height="20" viewBox="74 0 1218 60"><rect x="74" width="${f.end - 74}" height="60" fill="#95adcb"/>`;
            f.c.forEach(s => {
                svg += `<rect x="${s[0] - 2}" width="${s[1] - s[0] + 4}" height="60" fill="#b9d5c2"/><rect x="${s[0]}" width="${s[1] - s[0]}" height="60" fill="#87cc66"/>`;
            });
            f.t.forEach(x => { svg += `<rect x="${x - 1}" y="39" width="3" height="21" fill="#0a0f18"/>`; });
            if (f.reset) svg += '<rect x="1285" width="7" height="30" fill="#dc5454"/>';
            return svg + '</svg>';
        }

        document.getElementById('sessions').innerHTML = sessions.map((s, i) => `<tr>
            ${s.map((v, n) => `<td class="r${n ? '' : ' cut'}">${v}</td>`).join('')}
            <td><svg class="ic" width="16" height="16"><use href="#i-chrome"/></svg>chrome.exe [43096]</td>
            <td class="app">Bilibili</td><td class="bar">${flowBar(flows[i])}</td><td class="next">0</td>
        </tr>`).join('');

        const local = '192.168.0.102', remote = '114.116.220.180';
        // number, time, outgoing, protocol, application, size, payload, summary
        const packets = [
            [35, '14.983477000', true, 'TCP', '', '78', '0', '[SYN]序列号=2433321455,确认号=0,窗口=64240'],
            [37, '15.001434000', false, 'TCP', '', '66', '0', '[ACK, SYN]序列号=134242407,确认号=2433321456'],
            [38, '15.001607000', true, 'TCP', '', '58', '0', '[ACK]序列号=2433321456,确认号=134242408'],
            [39, '15.001822000', true, 'HTTPS', 'Bilibili', '575', '517', '客户端Hello'],
            [41, '15.014924000', false, 'TCP', 'Bilibili', '58', '0', '[ACK]序列号=134242408,确认号=2433321973'],
            [42, '15.020151000', false, 'HTTPS', 'Bilibili', '1,...', '1,...', '服务器Hello,证书'],
            [43, '15.020151000', false, 'HTTPS', 'Bilibili', '1,...', '1,...', ''],
            [44, '15.020151000', false, 'HTTPS', 'Bilibili', '1,...', '1,...', '服务器密钥交换']
        ];

        function place(isLocal, name) {
            return isLocal
                ? '<svg class="ic" width="16" height="16"><use href="#i-globe"/></svg>本地'
                : `<svg class="ic" width="14" height="12"><use href="#i-flag"/></svg>${name}`;
        }

        document.getElementById('packets').innerHTML = packets.map(p => `<tr>
            <td class="r">${p[0]}</td><td>2022/02/20</td><td class="r">20:23:${p[1]}</td>
            <td>${p[2] ? local : remote}</td><td>${p[2] ? 16413 : 443}</td><td class="geo">${place(p[2], '中国,北...')}</td>
            <td>${p[2] ? remote : local}</td><td>${p[2] ? 443 : 16413}</td><td class="geo">${place(!p[2], '中国,北京,华...')}</td>
            <td class="${p[3].toLowerCase()}">${p[3]}</td><td class="app">${p[4]}</td>
            <td class="r">${p[5]}</td><td class="r">${p[6]}</td><td class="${p[3].toLowerCase()}">${p[7]}</td>
        </tr>`).join('');
    </script>
</body>
</html>
```

FILE: styles.css
```css
* {
    box-sizing: border-box;
}
body {
    margin: 0;
    height: 100vh;
    overflow: hidden;
    display: flex;
    flex-direction: column;
    background: #bad7fd;
    font-family: "Noto Sans", "Noto Sans CJK SC", sans-serif;
    font-size: 15px;
    line-height: 20px;
    color: #101010;
    white-space: nowrap;
}
button {
    font: inherit;
    color: inherit;
    background: none;
    border: none;
    padding: 0;
    margin: 0;
    white-space: nowrap;
}
svg {
    flex: none;
}
ul {
    list-style: none;
    margin: 0;
    padding: 0;
}
.sprite {
    position: absolute;
    width: 0;
    height: 0;
}

/* title bar */
.titlebar {
    flex: none;
    height: 31px;
    display: grid;
    grid-template-columns: 1fr auto 1fr;
    background: #fdfdfd;
}
.quick {
    display: flex;
    gap: 8px;
    padding: 1px 0 0 8px;
    height: 29px;
    width: 136px;
    border: solid #b9bcc2;
    border-width: 0 1px 1px 0;
    border-radius: 0 0 14px 0;
}
.titlebar h1 {
    margin: 0;
    font-size: 16px;
    font-weight: normal;
    line-height: 33px;
    color: #000;
}
.winbtns {
    justify-self: end;
    width: 59px;
    display: flex;
    gap: 46px;
}

/* menu */
.menubar {
    flex: none;
    height: 34px;
    display: flex;
    background: #bad7fd;
    border-bottom: 1px solid #8db2dc;
}
.menubar button {
    width: 59px;
    padding-top: 1px;
    color: #15428b;
}
.menubar .on {
    width: 25px;
    height: 34px;
    margin-top: 1px;
    padding-right: 12px;
    text-align: right;
    background: linear-gradient(#f5faff, #dbe8f6);
    border: solid #8db2dc;
    border-width: 1px 1px 0 0;
    border-radius: 0 4px 0 0;
}
.menubar .on + button {
    margin-left: 3px;
}

/* ribbon */
.ribbon {
    flex: none;
    height: 131px;
    display: flex;
    gap: 4px;
    padding: 2px 0 3px;
    overflow: hidden;
    background: #d3e6f9;
    border-bottom: 1px solid #86a9d2;
}
.group {
    flex: none;
    display: flex;
    flex-direction: column;
    border: 1px solid #9fbfe0;
    border-radius: 3px;
    background: linear-gradient(#dee8f5, #d2dfef 21px, #c5d5eb 22px, #d6e4f3 96px);
    box-shadow: inset 1px 1px #e9f2fb;
}
.group.first {
    width: 119px;
    border-left: none;
    border-radius: 0 3px 3px 0;
}
.first .tool {
    width: 60px;
}
.first .tools {
    padding: 4px 0 0;
    margin-left: -3px;
}
.first .caption {
    text-align: left;
}
.tools {
    flex: 1;
    display: flex;
    padding: 4px 3px 0 2px;
}
.tool {
    display: flex;
    flex-direction: column;
    align-items: center;
    gap: 1px;
    height: 70px;
    min-width: 59px;
    padding: 0 3px;
    color: #15428b;
}
.tool:disabled {
    color: #8f949c;
}
.sep {
    width: 2px;
    height: 89px;
    margin: 0 1px;
    border-left: 1px solid #9dbbe0;
    background: #f0f6fd;
}
.caption {
    height: 29px;
    line-height: 30px;
    text-align: center;
    color: #3e6aaa;
    background: #bed5ee;
    overflow: hidden;
}
.gauge {
    width: 107px;
}
.gauge + .gauge {
    width: 111px;
}
.gauge .tools {
    justify-content: center;
    padding: 15px 0 0;
}
.dial {
    font-family: "Liberation Sans", sans-serif;
    font-size: 8px;
    fill: #444;
}
.unit {
    font-family: "Liberation Sans", sans-serif;
    font-size: 9px;
    fill: #6f87a6;
    text-anchor: middle;
}
.trend .tools {
    padding: 6px 3px 0;
}
.buffer {
    width: 217px;
}
.buffer .tools {
    padding: 6px 3px 0;
}
.meter {
    flex: none;
    width: 152px;
    height: 82px;
    padding-top: 56px;
    text-align: center;
    color: #fff;
    background:
        linear-gradient(#3a506e, #3a506e) 0 50px / 100% 32px no-repeat,
        linear-gradient(90deg, #3d5372 2px, transparent 2px) 0 0 / 6px 6px,
        linear-gradient(#3d5372 2px, #101f38 2px) 0 0 / 6px 6px;
}

/* work area */
.workspace {
    flex: 1;
    min-height: 0;
    display: flex;
    gap: 4px;
    padding-top: 5px;
    padding-bottom: 4px;
    background: linear-gradient(#a5c3ea, #a5c3ea 5px, #6593c9 6px);
}
.explorer {
    width: 48px;
    flex: none;
    overflow: hidden;
    background: #fdfdfd;
}
.explorer-head {
    height: 29px;
    background: linear-gradient(#e4efff, #b1d0f8);
}
.explorer-bar {
    height: 25px;
    padding: 4px 0 0 2px;
    background: linear-gradient(#e2eefe, #b6d3f9);
    border-bottom: 1px solid #7fa6d6;
}
.explorer li {
    height: 24px;
    line-height: 24px;
}
.explorer .on {
    width: 40px;
    text-indent: -3px;
    background: #8dbbe6;
    border: 1px solid #5f95c9;
    border-left: none;
    line-height: 22px;
}
.panel {
    flex: 1;
    min-width: 0;
    display: flex;
    flex-direction: column;
    background: #bad7fd;
    border: solid #5b5450;
    border-width: 0 0 2px 2px;
}

/* tabs */
.tabs {
    flex: none;
    height: 26px;
    display: flex;
    align-items: flex-end;
    padding-left: 6px;
    background: #bad7fd;
    border-bottom: 1px solid #55585e;
}
.tabs.low {
    height: 27px;
}
.tabs button {
    height: 22px;
    padding: 0 5px;
    color: #1c4587;
    background: linear-gradient(#e9f3ff, #b6d4fb);
    border: 1px solid #1c4587;
    border-left-color: #f4f9ff;
    border-bottom: none;
    border-radius: 5px 3px 0 0;
    line-height: 19px;
}
.tabs .lead,
.tabs .active {
    border-left: none;
    border-radius: 0 3px 0 0;
    padding-left: 0;
}
.tabs .active {
    position: relative;
    padding-left: 2px;
    font-weight: bold;
    background: linear-gradient(#ffe3bd, #fdc27c);
    border-color: #5a5a5a;
}
.slant.over {
    position: relative;
    margin-left: -18px;
}
.tabs .x {
    margin-left: 7px;
    font-size: 13px;
}

/* tool bars */
.toolbar {
    flex: none;
    height: 30px;
    display: flex;
    align-items: center;
    padding-left: 7px;
    background: linear-gradient(#e6f1ff, #cfe2fc 50%, #b2d1f9);
    border-bottom: 1px solid #7196c6;
}
.toolbar.main {
    gap: 1px;
    padding-left: 4px;
}
.tb {
    height: 22px;
    min-width: 22px;
    padding: 0 2px;
    display: flex;
    align-items: center;
    justify-content: center;
}
.tb.hot {
    padding: 0 1px;
    background: #fbb45c;
    border: 1px solid #e99a3c;
}
.caret {
    margin: 0 1px 0 5px;
}
.near {
    margin-left: 1px;
}
.div {
    width: 2px;
    height: 20px;
    margin: 0 2px;
    border-left: 1px solid #8fb0dc;
    background: #f2f8ff;
}
.toolbar label {
    margin: 0 3px 0 7px;
}
.main label {
    margin-left: 3px;
}
.combo {
    display: flex;
    flex: 0 1 552px;
    height: 25px;
    background: #fff;
    border: 1px solid #abc8ea;
}
.combo.green {
    flex-basis: 1010px;
    background: #c1fdc0;
}
.combo input {
    flex: 1;
    min-width: 0;
    padding: 3px 3px 0;
    border: none;
    outline: none;
    background: none;
    font: inherit;
    font-size: 16px;
    color: #222;
}
.combo button {
    width: 14px;
    display: flex;
    align-items: center;
    justify-content: center;
    background: linear-gradient(#dfecfd, #b9d4f8);
}
.crumb {
    height: 26px;
    margin-left: auto;
    padding: 0 0 0 10px;
    line-height: 23px;
    font-weight: bold;
    color: #0b0b0b;
    background: #b0cff7;
    border: 1px solid #2e5f9f;
    overflow: hidden;
    flex: none;
}
.crumb.top {
    width: 103px;
}
.crumb.bottom {
    width: 370px;
}

/* tables */
.grid-wrap {
    overflow: hidden;
    background: #fdfdfd;
    min-height: 0;
}
.upper {
    flex: 239 1 0;
}
.lower {
    flex: 215 1 0;
}
.grid {
    width: 100%;
    table-layout: fixed;
    border-collapse: separate;
    border-spacing: 0;
}
.w26 { width: 26px; }
.w42 { width: 42px; }
.w44 { width: 44px; }
.w46 { width: 46px; }
.w71 { width: 71px; }
.w80 { width: 80px; }
.w92 { width: 92px; }
.w95 { width: 95px; }
.w100 { width: 100px; }
.w125 { width: 125px; }
.w138 { width: 138px; }
.w140 { width: 140px; }
.w150 { width: 150px; }
.w168 { width: 168px; }
.w173 { width: 173px; }
.w187 { width: 187px; }
.w205 { width: 205px; }
.w412 { width: 412px; }
.grid th,
.grid td {
    height: 24px;
    padding: 0 6px;
    overflow: hidden;
    text-align: left;
    font-weight: normal;
    line-height: 20px;
    border-right: 1px solid #b4bdcd;
    border-bottom: 1px solid #bcc3cf;
}
.grid th {
    height: 26px;
    background: #d6e3f0;
    border-color: #b3c6dc;
}
.grid .r {
    text-align: right;
}
.grid .cut {
    direction: rtl;
}
.grid tbody tr:first-child td {
    background: #d6effb;
    border-color: #5c98c0;
}
.grid .bar {
    padding: 0 2px;
}
.grid .next {
    padding-left: 14px;
}
.grid .geo {
    padding: 0 0 0 5px;
}
.app {
    color: #3f9a35;
}
.tcp {
    color: #1b92a6;
}
.https {
    color: #1b35b0;
}
.ic {
    vertical-align: middle;
    margin: -3px 4px 0 0;
}
.ic[width="14"] {
    margin-left: 1px;
    margin-right: 5px;
}
.flow {
    display: block;
}

/* scroll bars */
.scroll {
    flex: none;
    height: 20px;
    display: flex;
    background: #eee;
}
.arrow {
    width: 20px;
    display: flex;
    align-items: center;
    justify-content: center;
}
.arrow::before {
    content: "";
    width: 7px;
    height: 7px;
    border: solid #505050;
    border-width: 0 0 2px 2px;
    transform: rotate(45deg);
}
.drag .gap {
    flex: 957;
}
.drag .thumb {
    flex: 651;
    background: #a5a5a5;
}
.drag .tail {
    flex: 46;
}
.rest .thumb {
    flex: 1260;
    background: #cbcbcb;
}
.rest .tail {
    flex: 392;
}
.splitter {
    flex: none;
    height: 6px;
    background: #f2f4f8;
    border-top: 1px solid #7a5f58;
    border-bottom: 1px solid #55585e;
}
.splitter.thick {
    border-top-color: #55585e;
    border-bottom: 2px solid #5c5f78;
}

/* decoded packet */
.decode {
    flex: 164 1 0;
    min-height: 0;
    overflow: hidden;
    padding: 0 0 0 10px;
    background: #fdfdfd;
    border: 1px solid #d9dc6a;
    border-left-color: #8a8a8a;
    border-bottom-color: #55585e;
}
.decode li {
    height: 22px;
    line-height: 22px;
    display: flex;
    align-items: center;
}
.node svg {
    margin: 0 2px 0 5px;
}
.box {
    width: 11px;
    height: 11px;
    flex: none;
    border: 1px solid #8c8c8c;
    background: linear-gradient(#444, #444) 2px 4px / 5px 1px no-repeat, #fbfbfb;
}
.node a {
    font-weight: bold;
    color: #10337c;
    text-decoration: none;
    border-bottom: 1px solid #10337c;
    line-height: 19px;
}
.node .name {
    width: 482px;
}
.leaf {
    margin-left: 5px;
    padding-left: 19px;
    border-left: 1px dotted #777;
}
.leaf .name {
    display: flex;
    align-items: center;
    gap: 2px;
    width: 491px;
    padding-left: 9px;
    color: #85842a;
    border-left: 1px dotted #777;
    background: repeating-linear-gradient(90deg, #888 0 1px, transparent 1px 2px) 0 11px / 9px 1px no-repeat;
}
.decode code {
    font-family: "DejaVu Sans Mono", "Liberation Mono", monospace;
    font-size: 13px;
    white-space: pre;
    color: #111;
}
.decode code b {
    font-weight: normal;
    color: #22a040;
}
.decode code u {
    text-decoration: none;
    color: #6f6f84;
}
.decode code s {
    text-decoration: none;
    color: #e0826a;
}
.decode em {
    font-style: normal;
    color: #8c8c8c;
}
.foot-tabs {
    flex: none;
    height: 27px;
    display: flex;
    padding-left: 6px;
}
.foot-tabs button {
    height: 24px;
    padding-right: 6px;
    line-height: 22px;
    color: #1c3a6e;
    font-weight: 500;
    background: linear-gradient(#ffe3bd, #fdc27c);
    border: solid #5a5a5a;
    border-width: 0 1px 1px 0;
    border-radius: 0 0 3px 0;
}

/* status bar */
.status {
    flex: none;
    height: 25px;
    display: flex;
    align-items: center;
    color: #123a7c;
    background: linear-gradient(#dfecfd, #c9dffb 9px, #a9cefa 10px, #b9d8fc);
}
.cell {
    height: 22px;
    display: flex;
    align-items: center;
    gap: 1px;
    padding: 0 9px;
    border-right: 1px solid #7da5d6;
    box-shadow: 1px 0 #f2f8ff;
}
.profile {
    width: 50px;
    padding: 0;
    text-indent: -1px;
}
.clock {
    padding: 0 4px;
}
.ready {
    padding: 0 5px;
    border: none;
    box-shadow: none;
}
.second {
    margin-left: 6px;
}
.alarm {
    display: flex;
    align-items: center;
    gap: 1px;
    margin-left: auto;
    padding-right: 68px;
}

/* task bar */
.taskbar {
    flex: none;
    height: 38px;
    display: flex;
    align-items: stretch;
    padding-left: 4px;
    background: linear-gradient(90deg, #1b2125, #1a1e21 540px, #2e3439 740px, #22272c 1100px, #181b1e 1250px);
    color: #f4f4f4;
}
.task {
    display: flex;
    align-items: center;
    gap: 5px;
    width: 190px;
    padding: 1px 5px 0;
    overflow: hidden;
    border-bottom: 3px solid #8b9aa4;
}
.pin {
    width: 46px;
    display: flex;
    align-items: center;
    justify-content: center;
    padding-bottom: 3px;
}
.task + .pin {
    margin-left: 5px;
}
.chrome {
    margin-left: 6px;
}
.current {
    width: 200px;
    margin-left: 5px;
    padding-left: 10px;
    background: #545a5c;
}
.tray {
    margin-left: auto;
    display: flex;
    align-items: center;
    gap: 10px;
    padding-right: 11px;
}
.tray svg {
    width: 20px;
    height: 20px;
}
.lang {
    width: 20px;
    font-size: 18px;
}
.taskbar time {
    width: 20px;
    overflow: hidden;
    font-size: 16px;
    line-height: 38px;
}
.wen {
    font-family: "Noto Sans CJK SC", sans-serif;
    font-size: 15px;
    font-weight: bold;
    fill: #23a38c;
}
.hex {
    font-family: "Liberation Sans", sans-serif;
    font-size: 10px;
    fill: #3c5f92;
}
.zh {
    font-family: "Noto Sans CJK SC", sans-serif;
    font-size: 9px;
    font-weight: bold;
    fill: #b8281c;
}
.az {
    font-family: "Liberation Sans", sans-serif;
    font-size: 11px;
    font-weight: bold;
    fill: #1a3f9a;
}

/* floating over the desktop */
.ime {
    position: absolute;
    right: 0;
    bottom: 38px;
    width: 66px;
    height: 35px;
    overflow: hidden;
    display: flex;
    align-items: center;
    gap: 12px;
    padding-left: 10px;
    border-radius: 6px 0 0 6px;
    background: #3b3e41;
    border: 1px solid #26282a;
    color: #cfcac0;
    font-size: 18px;
}
.ime i {
    width: 13px;
    height: 13px;
    flex: none;
    border-radius: 50%;
    background: radial-gradient(circle at 40% 30%, #ffd27a, #e48a17);
}
.cursor {
    position: absolute;
    left: 1222px;
    top: 506px;
}
```
